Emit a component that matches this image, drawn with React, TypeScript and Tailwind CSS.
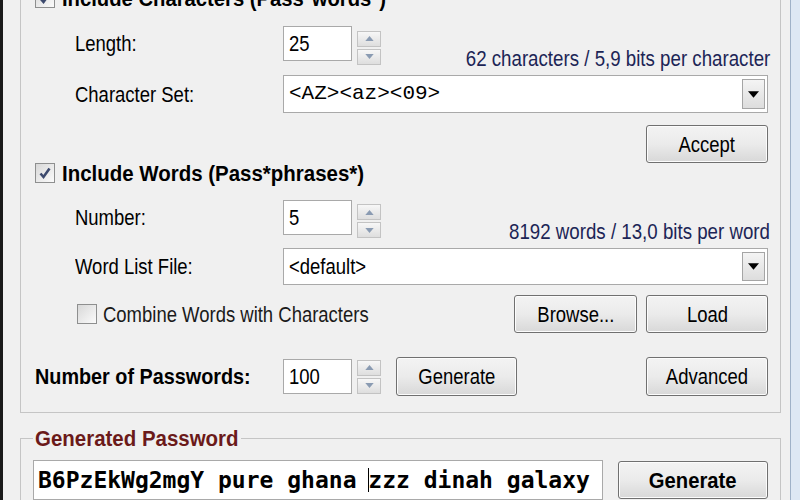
import React from 'react'

const sans = "font-['Liberation_Sans',Arial,sans-serif]"

// the dialog font is narrower than Arial, squeeze it a bit
function T({ children, className = '' }: { children: React.ReactNode; className?: string }) {
  return <span className={`inline-block whitespace-pre ${className}`}>{children}</span>
}

function CheckBox({ checked }: { checked?: boolean }) {
  return (
    <div className="h-[20px] w-[20px] shrink-0 border border-[#8e8f8f] bg-gradient-to-br from-[#d8d8d8] to-[#fbfbfb] p-[2px]">
      {checked && (
        <svg viewBox="0 0 14 14" className="h-full w-full">
          <path d="M2.5 7.5 L5.5 11 L11.5 2.5" fill="none" stroke="#3d4a6e" strokeWidth="2.6" />
        </svg>
      )}
    </div>
  )
}

function Spin() {
  return (
    <div className="ml-[5px] flex w-[24px] flex-col gap-[2px] self-center">
      {['up', 'down'].map((d) => (
        <div
          key={d}
          className="flex h-[16px] items-center justify-center border border-[#c3c3c3] bg-gradient-to-b from-[#f7f7f7] to-[#dedede]"
        >
          <svg viewBox="0 0 10 6" className="h-[5px] w-[9px]">
            {d === 'up' ? (
              <path d="M0 6 L5 0 L10 6 Z" fill="#8a9bb2" />
            ) : (
              <path d="M0 0 L5 6 L10 0 Z" fill="#8a9bb2" />
            )}
          </svg>
        </div>
      ))}
    </div>
  )
}

function NumField({ value }: { value: string }) {
  return (
    <div className="flex h-[35px] w-[69px] items-center border border-[#a9a9a9] bg-white pl-[5px] text-[22px] leading-none text-black">
      <T className="origin-left scale-x-[0.84]">{value}</T>
    </div>
  )
}

function Combo({ value, mono }: { value: string; mono?: boolean }) {
  return (
    <div className="flex h-full flex-1 items-center border border-[#a9a9a9] bg-white pl-[5px] pr-[2px]">
      <span className="flex-1">
        {mono ? (
          <span className="font-['Liberation_Mono','Courier_New',monospace] text-[21px] text-black">{value}</span>
        ) : (
          <T className="origin-left scale-x-[0.84] text-[22px] text-black">{value}</T>
        )}
      </span>
      <div className="flex h-[calc(100%-6px)] w-[23px] items-center justify-center border border-[#a5a5a5] bg-gradient-to-b from-[#f4f4f4] to-[#dddddd]">
        <svg viewBox="0 0 10 6" className="h-[7px] w-[11px]">
          <path d="M0 0 L10 0 L5 6 Z" fill="#000" />
        </svg>
      </div>
    </div>
  )
}

function Button({ label, bold, className }: { label: string; bold?: boolean; className?: string }) {
  return (
    <div
      className={`flex items-center justify-center rounded-[3px] border border-[#707070] bg-gradient-to-b from-[#f3f3f3] via-[#ebebeb] to-[#d8d8d8] text-[22px] text-black shadow-[inset_0_0_0_1px_#fcfcfc] ${className ?? ''}`}
    >
      {bold ? (
        <T className="origin-center scale-x-[0.92] font-bold">{label}</T>
      ) : (
        <T className="origin-center scale-x-[0.84]">{label}</T>
      )}
    </div>
  )
}

function Label({ text, className }: { text: string; className?: string }) {
  return (
    <div className={`text-[22px] text-black ${className ?? ''}`}>
      <T className="origin-left scale-x-[0.84]">{text}</T>
    </div>
  )
}

function Info({ text, className }: { text: string; className?: string }) {
  return (
    <div className={`ml-auto -mr-[2px] text-[22px] leading-[20px] text-[#1c2556] ${className ?? ''}`}>
      <T className="origin-right scale-x-[0.85]">{text}</T>
    </div>
  )
}

export default function App() {
  return (
    <div className={`flex h-[500px] w-[800px] overflow-hidden bg-[#f0f0f0] ${sans}`}>
      <div className="w-[3px] shrink-0 bg-[#1a1a1a]" />

      <div className="flex flex-1 flex-col pl-[17px] pr-[9px]">
        {/* Password options group */}
        <fieldset className="-mt-[13px] border border-[#c5c5c5] pb-[16px] pl-[14px] pr-[12px]">
          <legend className="-ml-[2px] flex h-[22px] items-center gap-[7px] px-[2px]">
            <CheckBox checked />
            <T className="-mr-[28px] origin-left scale-x-[0.92] text-[22px] font-bold text-black">
              Include Characters (Pass*words*)
            </T>
          </legend>

          <div className="mt-[17px] flex items-start pl-[40px]">
            <Label text="Length:" className="flex h-[35px] w-[208px] items-center" />
            <NumField value="25" />
            <Spin />
            <Info text="62 characters / 5,9 bits per character" className="mt-[23px]" />
          </div>

          <div className="mt-[6px] flex h-[38px] items-center pl-[40px]">
            <Label text="Character Set:" className="w-[208px]" />
            <Combo value="<AZ><az><09>" mono />
          </div>

          <div className="mt-[12px] flex justify-end">
            <Button label="Accept" className="h-[38px] w-[122px]" />
          </div>

          <div className="flex h-[20px] items-center gap-[7px]">
            <CheckBox checked />
            <T className="origin-left scale-x-[0.93] text-[22px] font-bold text-black">Include Words (Pass*phrases*)</T>
          </div>

          <div className="mt-[17px] flex items-start pl-[40px]">
            <Label text="Number:" className="flex h-[35px] w-[208px] items-center" />
            <NumField value="5" />
            <Spin />
            <Info text="8192 words / 13,0 bits per word" className="mt-[22px]" />
          </div>

          <div className="mt-[6px] flex h-[37px] items-center pl-[40px]">
            <Label text="Word List File:" className="w-[208px]" />
            <Combo value="<default>" />
          </div>

          <div className="mt-[10px] flex h-[38px] items-center pl-[42px]">
            <CheckBox />
            <div className="ml-[6px] text-[22px] text-[#1a1a1a]">
              <T className="origin-left scale-x-[0.84]">Combine Words with Characters</T>
            </div>
            <Button label="Browse..." className="ml-auto h-[38px] w-[123px]" />
            <Button label="Load" className="ml-[9px] h-[38px] w-[122px]" />
          </div>

          <div className="mt-[24px] flex h-[39px] items-center">
            <div className="w-[248px] text-[22px] font-bold text-black">
              <T className="origin-left scale-x-[0.9]">Number of Passwords:</T>
            </div>
            <NumField value="100" />
            <Spin />
            <Button label="Generate" className="ml-[15px] h-[39px] w-[121px]" />
            <Button label="Advanced" className="ml-auto h-[39px] w-[122px]" />
          </div>
        </fieldset>

        {/* Output group */}
        <fieldset className="mt-[14px] border border-[#c5c5c5] pl-[14px] pr-[12px]">
          <legend className="-ml-[2px] flex h-[22px] items-center px-[2px]">
            <T className="-mr-[15px] origin-left scale-x-[0.93] text-[22px] font-bold text-[#6b1a1a]">
              Generated Password
            </T>
          </legend>
          <div className="mt-[11px] flex items-center">
            <div className="-ml-[2px] flex h-[40px] w-[570px] items-center border border-[#a9a9a9] bg-white pl-[4px] font-['DejaVu_Sans_Mono',monospace] text-[23px] font-bold whitespace-pre text-black">
              <span>B6PzEkWg2mgY pure ghana </span>
              <span className="-ml-[2px] h-[24px] w-px bg-black" />
              <span className="-ml-[1px]">zzz dinah galaxy</span>
            </div>
            <Button label="Generate" bold className="ml-auto h-[38px] w-[150px]" />
          </div>
        </fieldset>
      </div>

      <div className="w-[10px] shrink-0 border-l border-[#9fb2c8] bg-[#dde8f4]" />
    </div>
  )
}
